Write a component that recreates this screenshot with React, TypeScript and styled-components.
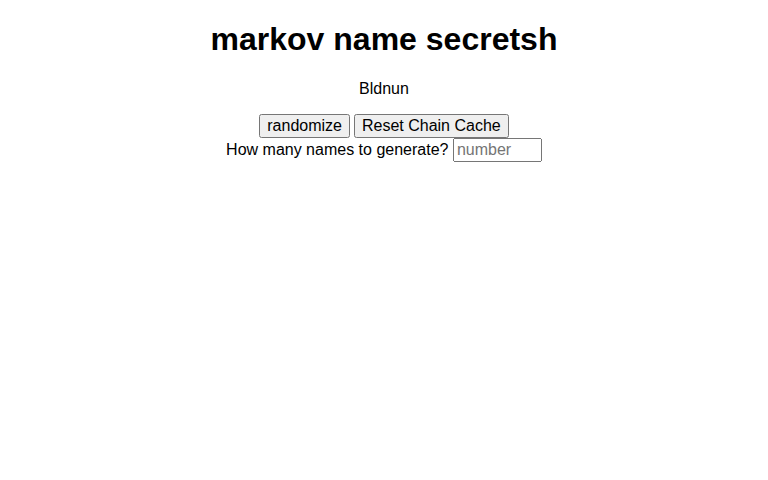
import { createGlobalStyle } from "styled-components";
import styled from "styled-components";
import { useState } from "react";

const GlobalStyle = createGlobalStyle`
  body {
    margin: 0 8px 8px;
    font-family: "Liberation Sans", Arial, sans-serif;
    background: #fff;
    color: #000;
  }
`;

const Page = styled.main`
  text-align: center;
`;

const Title = styled.h1`
  font-size: 2em;
  margin: 0.67em 0;
`;

const Output = styled.p`
  margin: 1em 0;
`;

const Controls = styled.div``;

const Button = styled.button`
  font-family: "Liberation Sans", Arial, sans-serif;
  font-size: 16px;
  margin: 0 2px;
`;

const CountRow = styled.div``;

const CountInput = styled.input`
  font-family: "Liberation Sans", Arial, sans-serif;
  font-size: 16px;
  width: 81px;
`;

export default function App() {
  const [count, setCount] = useState("");
  return (
    <Page>
      <GlobalStyle />
      <Title>markov name secretsh</Title>
      <Output>Bldnun</Output>
      <Controls>
        <Button>randomize</Button>
        <Button>Reset Chain Cache</Button>
      </Controls>
      <CountRow>
        How many names to generate?{" "}
        <CountInput
          type="number"
          placeholder="number"
          value={count}
          onChange={(e) => setCount(e.target.value)}
        />
      </CountRow>
    </Page>
  );
}
